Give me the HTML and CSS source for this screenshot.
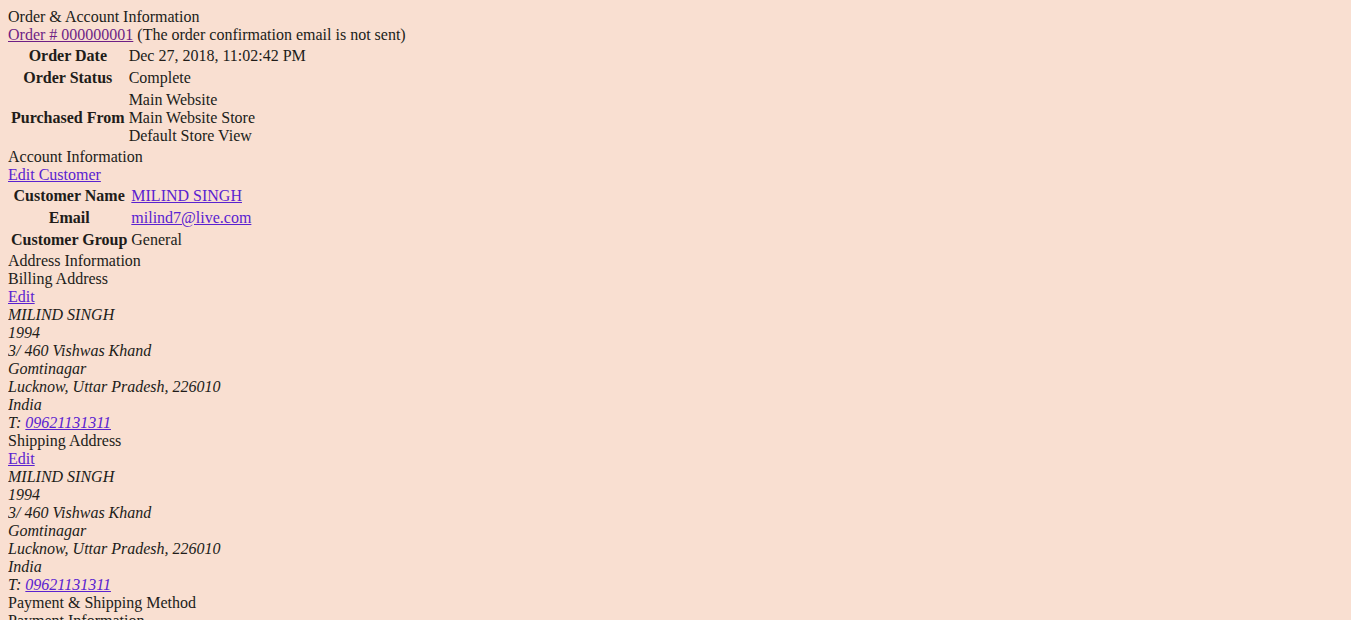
FILE: index.html
```html
<!DOCTYPE html>
<html>
<head>
<meta charset="utf-8">
<title>Order</title>
<link rel="stylesheet" href="styles.css">
</head>
<body class="page">
<section class="block">
  <div class="title">Order &amp; Account Information</div>
  <div class="line"><a class="link visited" href="#order">Order # 000000001</a> (The order confirmation email is not sent)</div>
  <table class="info">
    <tr><th>Order Date</th><td>Dec 27, 2018, 11:02:42 PM</td></tr>
    <tr><th>Order Status</th><td>Complete</td></tr>
    <tr><th>Purchased From</th><td>Main Website<br>Main Website Store<br>Default Store View</td></tr>
  </table>
  <div class="title">Account Information</div>
  <div class="line"><a class="link" href="#customer">Edit Customer</a></div>
  <table class="info">
    <tr><th>Customer Name</th><td><a class="link" href="#customer">MILIND SINGH</a></td></tr>
    <tr><th>Email</th><td><a class="link" href="#mail">milind7@live.com</a></td></tr>
    <tr><th>Customer Group</th><td>General</td></tr>
  </table>
</section>
<section class="block">
  <div class="title">Address Information</div>
  <div class="title">Billing Address</div>
  <div class="line"><a class="link" href="#edit">Edit</a></div>
  <address class="addr">MILIND SINGH<br>1994<br>3/ 460 Vishwas Khand<br>Gomtinagar<br>Lucknow, Uttar Pradesh, 226010<br>India<br>T: <a class="link" href="#tel">09621131311</a></address>
  <div class="title">Shipping Address</div>
  <div class="line"><a class="link" href="#edit">Edit</a></div>
  <address class="addr">MILIND SINGH<br>1994<br>3/ 460 Vishwas Khand<br>Gomtinagar<br>Lucknow, Uttar Pradesh, 226010<br>India<br>T: <a class="link" href="#tel">09621131311</a></address>
</section>
<section class="block">
  <div class="title">Payment &amp; Shipping Method</div>
  <div class="title">Payment Information</div>
  <div class="line">Check / Money order</div>
</section>
</body>
</html>
```
FILE: styles.css
```css
html {
  background: #f9dfd1;
}
.page {
  margin: 8px;
  background: #f9dfd1;
  color: #211c19;
  font-family: "Liberation Serif", "Times New Roman", serif;
  font-size: 16px;
}
.link {
  color: #5a22d0;
  text-decoration: underline;
}
.link.visited {
  color: #6e1f85;
}
.info {
  border-collapse: separate;
  border-spacing: 2px;
}
.info th {
  font-weight: bold;
  text-align: center;
  padding: 1px;
}
.info td {
  text-align: left;
  padding: 1px;
}
.addr {
  font-style: italic;
}
```
